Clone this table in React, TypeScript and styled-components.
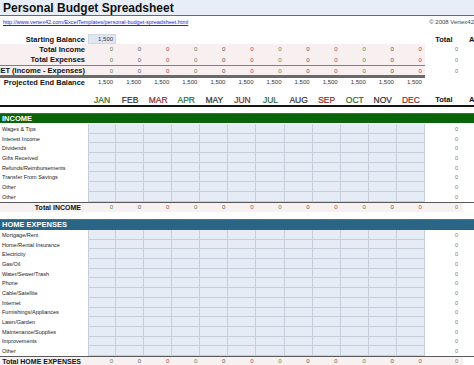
import styled, { createGlobalStyle } from "styled-components";

const GlobalStyle = createGlobalStyle`
  html, body {
    margin: 0;
    padding: 0;
    background: #ffffff;
    overflow: hidden;
  }
  body {
    font-family: "Liberation Sans", Arial, sans-serif;
    color: #222;
  }
`;

const COLS = "88px repeat(12, 28.08px) 38px 80px";
const GRID_RIGHT = 425;

type Tone = "green" | "dark" | "red";
const toneFor = (i: number): Tone => (["green", "dark", "red"] as Tone[])[i % 3];
const valueColor: Record<Tone, string> = {
  green: "#4f8a4f",
  dark: "#555555",
  red: "#a34848",
};
const headColor: Record<Tone, string> = {
  green: "#2c6a2c",
  dark: "#2e2e2e",
  red: "#8a2a2a",
};

const MONTHS = ["JAN", "FEB", "MAR", "APR", "MAY", "JUN", "JUL", "AUG", "SEP", "OCT", "NOV", "DEC"];

const INCOME = [
  "Wages & Tips",
  "Interest Income",
  "Dividends",
  "Gifts Received",
  "Refunds/Reimbursements",
  "Transfer From Savings",
  "Other",
  "Other",
];

const HOME = [
  "Mortgage/Rent",
  "Home/Rental Insurance",
  "Electricity",
  "Gas/Oil",
  "Water/Sewer/Trash",
  "Phone",
  "Cable/Satellite",
  "Internet",
  "Furnishings/Appliances",
  "Lawn/Garden",
  "Maintenance/Supplies",
  "Improvements",
  "Other",
];

const Sheet = styled.div`
  width: 474px;
  height: 365px;
  overflow: hidden;
`;

const TitleBar = styled.header`
  height: 15px;
  background: #e7eef7;
  border-bottom: 1px solid #6b6b6b;
  display: flex;
  align-items: center;
  padding-left: 3px;
  font-size: 12px;
  font-weight: bold;
  color: #111;
  white-space: nowrap;
`;

const LinkRow = styled.div`
  height: 12px;
  display: flex;
  align-items: center;
  justify-content: space-between;
  padding-left: 3px;
  white-space: nowrap;
`;

const SiteLink = styled.a`
  font-size: 5.5px;
  color: #2323d8;
  text-decoration: underline;
`;

const Copyright = styled.span`
  font-size: 6px;
  color: #444;
`;

const Grid = styled.div`
  display: grid;
  grid-template-columns: ${COLS};
  align-items: center;
`;

const Summary = styled.section`
  margin-top: 6px;
`;

const SumRow = styled(Grid)<{ $h: number; $tint?: boolean }>`
  height: ${(p) => p.$h}px;
  background: ${(p) =>
    p.$tint
      ? `linear-gradient(to right, #f7eff0 0 ${GRID_RIGHT}px, transparent ${GRID_RIGHT}px)`
      : "transparent"};
`;

const Rule = styled.div<{ $w: number; $thick?: boolean; $color?: string }>`
  width: ${(p) => p.$w}px;
  height: ${(p) => (p.$thick ? 2.5 : 1)}px;
  background: ${(p) => p.$color ?? (p.$thick ? "#6a6a6a" : "#808080")};
`;

const SumLabel = styled.div`
  display: flex;
  justify-content: flex-end;
  padding-right: 3px;
  white-space: nowrap;
  font-size: 7.5px;
  font-weight: bold;
  color: #111;
`;

const Value = styled.div<{ $tone: Tone }>`
  text-align: right;
  padding-right: 3px;
  font-size: 6px;
  color: ${(p) => valueColor[p.$tone]};
`;

const PlainValue = styled.div`
  text-align: right;
  padding-right: 3px;
  font-size: 6px;
  color: #333;
`;

const BalanceBox = styled.div`
  height: 10px;
  box-sizing: border-box;
  background: #dfe7f2;
  border: 1px solid #cfd7e2;
  text-align: right;
  padding-right: 2px;
  font-size: 6px;
  line-height: 8px;
  color: #333;
`;

const TotalValue = styled.div`
  text-align: right;
  padding-right: 5px;
  font-size: 5.5px;
  color: #777;
`;

const ColHead = styled.div`
  text-align: center;
  font-size: 7.5px;
  font-weight: bold;
  color: #111;
  white-space: nowrap;
`;

const AvgHead = styled.div`
  padding-left: 6px;
  font-size: 7.5px;
  font-weight: bold;
  color: #111;
  white-space: nowrap;
`;

const MonthRow = styled(Grid)`
  margin-top: 8px;
  height: 11px;
`;

const Month = styled.div<{ $tone: Tone }>`
  text-align: center;
  font-size: 8.5px;
  color: ${(p) => headColor[p.$tone]};
  -webkit-text-stroke: 0.2px ${(p) => headColor[p.$tone]};
`;

const HeadRule = styled.div`
  height: 2px;
  background: #151515;
  margin-bottom: 6px;
`;

const SectionBar = styled.div<{ $kind: "income" | "home" }>`
  height: ${(p) => (p.$kind === "income" ? 10 : 11.5)}px;
  margin-bottom: ${(p) => (p.$kind === "income" ? 1 : 0)}px;
  background: ${(p) => (p.$kind === "income" ? "#0a640a" : "#2b6586")};
  border-top: 1px solid ${(p) => (p.$kind === "income" ? "#2f7d2f" : "#3f7797")};
  box-sizing: border-box;
  display: flex;
  align-items: center;
  padding-left: 2px;
  font-size: 7.5px;
  font-weight: bold;
  color: #ffffff;
`;

const DataRow = styled(Grid)`
  height: 9.7px;
  align-items: stretch;
`;

const RowLabel = styled.div`
  display: flex;
  align-items: center;
  padding-left: 2px;
  font-size: 5.5px;
  color: #222;
  white-space: nowrap;
`;

const Cell = styled.div<{ $first?: boolean }>`
  background: #e5ecf5;
  border-right: 1px solid #c6cfdb;
  border-bottom: 1px solid #c6cfdb;
  border-left: ${(p) => (p.$first ? "1px solid #c6cfdb" : "none")};
`;

const RowTotal = styled(TotalValue)`
  display: flex;
  align-items: center;
  justify-content: flex-end;
`;

const TotalRow = styled(Grid)`
  height: 9px;
  background: linear-gradient(to right, #f8f1f2 0 463px, transparent 463px);
`;

const TotalLabel = styled.div`
  display: flex;
  justify-content: flex-end;
  padding-right: 7px;
  white-space: nowrap;
  font-size: 7px;
  font-weight: bold;
  color: #111;
`;

const Gap = styled.div`
  height: 7px;
`;

const zeros = () =>
  MONTHS.map((m, i) => (
    <Value key={m} $tone={toneFor(i)}>
      0
    </Value>
  ));

const Section = ({ title, kind, rows, total }: { title: string; kind: "income" | "home"; rows: string[]; total: string }) => (
  <>
    <SectionBar $kind={kind}>{title}</SectionBar>
    {rows.map((r, idx) => (
      <DataRow key={r + idx}>
        <RowLabel>{r}</RowLabel>
        {MONTHS.map((m, i) => (
          <Cell key={m} $first={i === 0} />
        ))}
        <RowTotal>0</RowTotal>
        <div />
      </DataRow>
    ))}
    <Rule $w={474} $color="#5a5a5a" />
    <TotalRow>
      <TotalLabel>{total}</TotalLabel>
      {zeros()}
      <TotalValue>0</TotalValue>
      <div />
    </TotalRow>
  </>
);

export default function App() {
  return (
    <Sheet>
      <GlobalStyle />
      <TitleBar>Personal Budget Spreadsheet</TitleBar>
      <LinkRow>
        <SiteLink href="#">http://www.vertex42.com/ExcelTemplates/personal-budget-spreadsheet.html</SiteLink>
        <Copyright>© 2008 Vertex42</Copyright>
      </LinkRow>

      <Summary>
        <SumRow $h={10}>
          <SumLabel>Starting Balance</SumLabel>
          <BalanceBox>1,500</BalanceBox>
          {MONTHS.slice(1).map((m) => (
            <div key={m} />
          ))}
          <ColHead>Total</ColHead>
          <AvgHead>Average</AvgHead>
        </SumRow>
        <SumRow $h={10.5} $tint>
          <SumLabel>Total Income</SumLabel>
          {zeros()}
          <TotalValue>0</TotalValue>
          <div />
        </SumRow>
        <SumRow $h={10.5} $tint>
          <SumLabel>Total Expenses</SumLabel>
          {zeros()}
          <TotalValue>0</TotalValue>
          <div />
        </SumRow>
        <Rule $w={GRID_RIGHT} />
        <SumRow $h={9} $tint>
          <SumLabel>NET (Income - Expenses)</SumLabel>
          {zeros()}
          <TotalValue>0</TotalValue>
          <div />
        </SumRow>
        <Rule $w={GRID_RIGHT} $thick />
        <SumRow $h={8.5}>
          <SumLabel>Projected End Balance</SumLabel>
          {MONTHS.map((m) => (
            <PlainValue key={m}>1,500</PlainValue>
          ))}
          <div />
          <div />
        </SumRow>
      </Summary>

      <MonthRow>
        <div />
        {MONTHS.map((m, i) => (
          <Month key={m} $tone={toneFor(i)}>
            {m}
          </Month>
        ))}
        <ColHead>Total</ColHead>
        <AvgHead>Average</AvgHead>
      </MonthRow>
      <HeadRule />

      <Section title="INCOME" kind="income" rows={INCOME} total="Total INCOME" />
      <Gap />
      <Section title="HOME EXPENSES" kind="home" rows={HOME} total="Total HOME EXPENSES" />
    </Sheet>
  );
}
